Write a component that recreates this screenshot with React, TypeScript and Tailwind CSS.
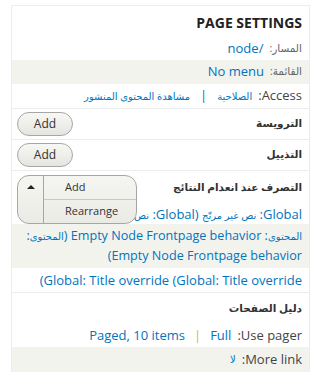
import React from "react";

const link = "text-[#0074bd]";
const ar = "text-[10px]";

function AddButton() {
  return (
    <button className="h-[24px] w-[56px] rounded-full border border-[#a6a6a6] bg-gradient-to-b from-[#f7f7f4] to-[#e5e5e0] text-[12px] text-[#333]">
      Add
    </button>
  );
}

function SectionRow({ title }: { title: string }) {
  return (
    <div className="flex h-[31px] items-center justify-between border-b border-[#ececec] pr-[7px] pl-[5px]">
      <span className="text-[10.5px] font-bold text-[#333]">{title}</span>
      <AddButton />
    </div>
  );
}

export default function App() {
  return (
    <div className="w-[323px] bg-white pt-[5px] font-['Open_Sans','DejaVu_Sans',sans-serif] text-[13px]">
      <div dir="rtl" className="ml-[11px] w-[299px] border-x border-t border-[#ececec]">
        <div className="flex h-[32px] items-center pr-[7px]">
          <h2 className="text-[14px] font-bold uppercase text-[#222]">Page settings</h2>
        </div>

        <div className="flex h-[22px] items-center gap-[6px] pr-[7px]">
          <span className="text-[10.5px] text-[#666]">المسار:</span>
          <span className={link}>/node</span>
        </div>
        <div className="flex h-[24px] items-center gap-[6px] bg-[#f3f3ee] pr-[7px]">
          <span className="text-[10.5px] text-[#666]">القائمة:</span>
          <span className={link}>No menu</span>
        </div>
        <div className="flex h-[25px] items-center gap-[6px] border-b border-[#ececec] pr-[7px]">
          <span className="text-[#444]">Access:</span>
          <span className={`${link} ${ar}`}>الصلاحية</span>
          <span className={`${link} px-[4px]`}>|</span>
          <span className={`${link} ${ar}`}>مشاهدة المحتوى المنشور</span>
        </div>

        <SectionRow title="الترويسة" />
        <SectionRow title="التذييل" />

        <div className="relative border-b border-[#ececec]">
          <div className="flex h-[33px] items-center pr-[7px]">
            <span className="text-[10.5px] font-bold text-[#333]">التصرف عند انعدام النتائج</span>
          </div>
          <div className="h-[20px] whitespace-nowrap pr-[7px] leading-[20px]">
            <span className={link}>
              Global: <span className={ar}>نص غير مرتّج</span> (Global: <span className={ar}>نص غير مرتّج</span>)
            </span>
          </div>
          <div className="bg-[#f3f3ee] py-[2px] pr-[7px] pl-[4px] text-[12.6px] leading-[20px]">
            <span className={link}>
              <span className={ar}>المحتوى</span>: Empty Node Frontpage behavior (<span className={ar}>المحتوى</span>: Empty Node
              Frontpage behavior)
            </span>
          </div>
          <div className="h-[24px] pr-[7px] leading-[24px]">
            <span className={link}>
              Global: Title override (Global: Title override<span className="[unicode-bidi:isolate]">)</span>
            </span>
          </div>

          <div
            dir="ltr"
            className="absolute left-[5px] top-[4px] flex h-[49px] w-[120px] overflow-hidden rounded-[12px] border border-[#a6a6a6] bg-gradient-to-b from-[#f5f5f1] to-[#ebebe6] text-[11px] text-[#333]"
          >
            <div className="flex w-[26px] justify-center border-r border-[#a6a6a6] pt-[9px]">
              <div className="h-0 w-0 border-x-[4px] border-b-[4px] border-x-transparent border-b-[#222]" />
            </div>
            <div className="flex flex-1 flex-col">
              <div className="flex h-[24px] items-center border-b border-[#c8c8c4] pl-[21px]">Add</div>
              <div className="flex h-[23px] items-center pl-[21px]">Rearrange</div>
            </div>
          </div>
        </div>

        <div className="flex h-[32px] items-center pr-[7px]">
          <span className="text-[10.5px] font-bold text-[#333]">دليل الصفحات</span>
        </div>
        <div className="flex h-[22px] items-center pr-[7px]">
          <span className="text-[#444]">Use pager:</span>
          <span className={`${link} mr-[6px]`}>Full</span>
          <span className="mx-[9px] text-[#e0a85a]">|</span>
          <span className={link}>Paged, 10 items</span>
        </div>
        <div className="flex h-[25px] items-center gap-[6px] bg-[#f3f3ee] pr-[7px]">
          <span className="text-[#444]">More link:</span>
          <span className={`${link} ${ar}`}>لا</span>
        </div>
      </div>
    </div>
  );
}
